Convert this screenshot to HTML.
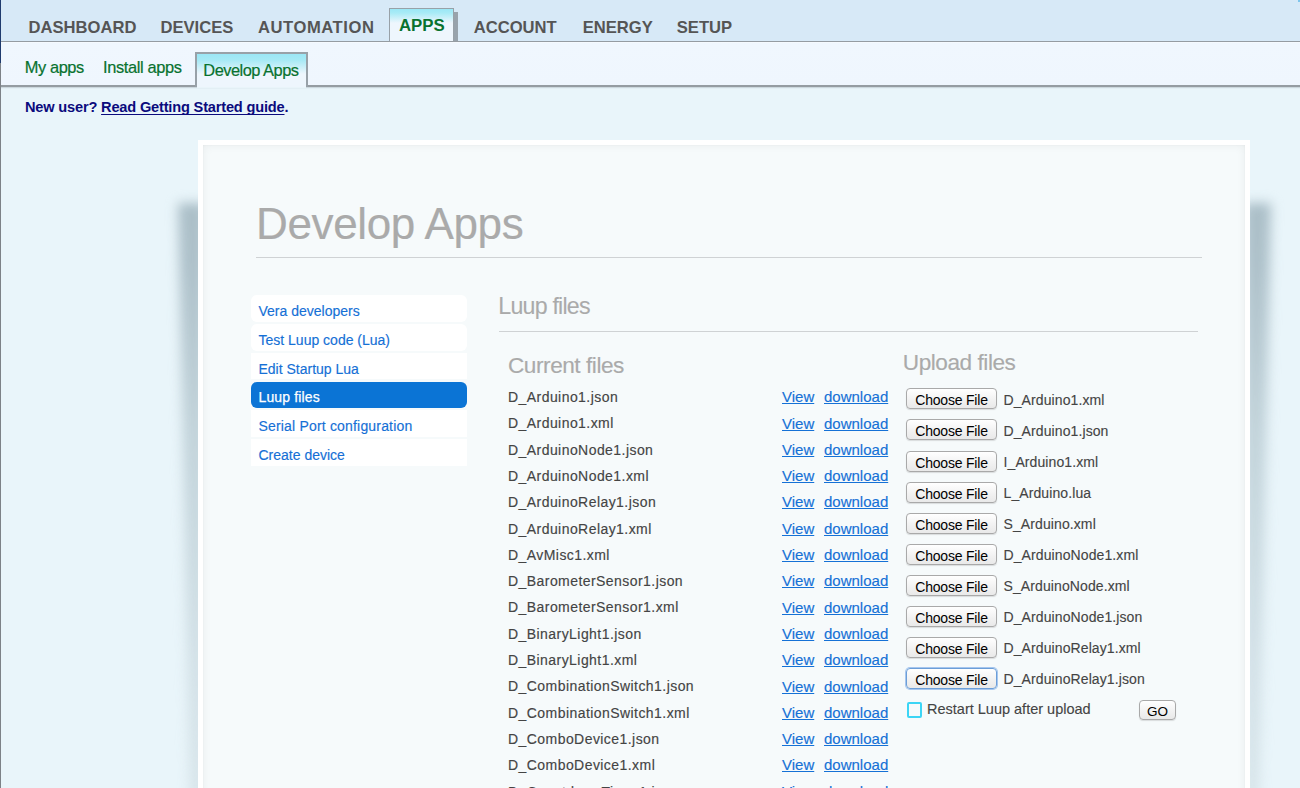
<!DOCTYPE html>
<html><head><meta charset="utf-8">
<style>
html,body{margin:0;padding:0;}
body{width:1300px;height:788px;overflow:hidden;position:relative;background:#e9f5fa;font-family:"Liberation Sans",sans-serif;}
.a{position:absolute;white-space:nowrap;}
#edge{left:0;top:0;width:1px;height:788px;background:#7d8287;}
#edge2{left:0;top:0;width:1px;height:63px;background:#1f3b6e;}
#topnav{left:0;top:0;width:1300px;height:41px;background:#d7e9f7;border-bottom:1px solid #959ca2;}
#subnav{left:0;top:42px;width:1300px;height:43px;background:linear-gradient(#fbfdff 0,#f0f7fe 1px,#eff6fe 100%);border-bottom:2px solid #959ca2;box-shadow:0 1px 1px rgba(120,130,140,0.25);}
.tab{font-weight:bold;font-size:16.6px;color:#555;top:18px;line-height:20px;}
#appsTab{left:389px;top:8px;width:63px;height:32px;border:1px solid #98a1a8;border-bottom:none;background:linear-gradient(#9be7f6 0px,#a8ebf6 4px,#eef6fd 14px,#eef6fd 100%);}
#appsShadow{left:453px;top:12px;width:5px;height:29px;background:#98a3ac;}
.sub{font-size:16.4px;color:#08722f;-webkit-text-stroke:0.2px #08722f;top:57.5px;line-height:18px;}
#devTab{left:195px;top:52px;width:109px;height:33px;border:2px solid #98a1a8;border-bottom:none;background:linear-gradient(#9be6f5 0px,#a6e9f5 6px,#eef6fd 20px);}
#newuser{left:25px;top:98.6px;font-size:14.6px;font-weight:bold;color:#0b0b7d;line-height:17px;letter-spacing:-0.18px;}
#newuser a{color:#0b0b7d;text-decoration:underline;text-decoration-skip-ink:none;text-underline-offset:2px;}
#shL{left:140px;top:170px;width:70px;height:660px;filter:blur(6px);}
#shR{left:1240px;top:170px;width:60px;height:660px;filter:blur(6px);}
.shi{position:absolute;left:0;top:0;width:100%;height:100%;}
#panel{left:198px;top:140px;width:1042px;height:700px;border:5px solid #fff;background:#f6fafb;box-shadow:inset 0 0 2px rgba(0,0,0,0.06),inset 0 0 10px rgba(0,0,0,0.06);}
#title{left:256px;top:199.2px;font-size:44px;color:#aaa;-webkit-text-stroke:0.2px #aaa;line-height:50px;letter-spacing:-0.35px;}
#hr1{left:256px;top:257px;width:946px;height:1px;background:#cfd2d4;}
.mi{left:251px;width:208px;height:26.5px;background:#fff;color:#1570d6;-webkit-text-stroke:0.15px #1570d6;font-size:14px;line-height:26.5px;padding-left:7.5px;padding-top:2.8px;height:23.7px;}
.mi.rnd{border-radius:6px;}
.mi.sel{background:#0b74d5;color:#fff;border-radius:6px;-webkit-text-stroke:0.25px #fff;letter-spacing:0.15px;}
#h2{left:498.3px;top:292.6px;font-size:23.2px;color:#aaa;-webkit-text-stroke:0.1px #aaa;line-height:26px;letter-spacing:-0.78px;}
#hr2{left:499px;top:331px;width:699px;height:1px;background:#cfd2d4;}
#cur{left:508px;top:352.9px;font-size:22.6px;color:#aaa;-webkit-text-stroke:0.15px #aaa;line-height:25px;letter-spacing:-0.45px;}
#upl{left:902.8px;top:350.3px;font-size:22.6px;color:#aaa;-webkit-text-stroke:0.15px #aaa;line-height:25px;letter-spacing:-0.45px;}
.fn{left:508px;font-size:14px;line-height:14px;color:#444;-webkit-text-stroke:0.15px #444;letter-spacing:0.44px;}
.lk{font-size:15px;line-height:15px;color:#1571d6;-webkit-text-stroke:0.15px #1571d6;text-decoration:underline;text-decoration-skip-ink:none;}
.btn{left:906px;width:89px;height:19px;border:1px solid #a9a9a9;border-radius:4px;background:linear-gradient(#fff,#f1f1f1 60%,#e9e9e9);box-shadow:0 1px 1px rgba(0,0,0,0.12);font-size:14px;line-height:22.5px;text-align:center;color:#000;letter-spacing:-0.2px;}
.btn.foc{border-color:#6c9ed8;box-shadow:0 0 0 1px #a6c6ee;}
.up{left:1003.5px;font-size:14px;line-height:14px;color:#444;-webkit-text-stroke:0.12px #444;letter-spacing:0.1px;}
#cb{left:906.5px;top:702px;width:11.5px;height:11.5px;border:2px solid #3cd5f5;border-radius:2px;}
#restart{left:927px;top:700.2px;font-size:14.5px;line-height:18px;color:#444;-webkit-text-stroke:0.12px #444;}
#go{left:1139px;top:700px;width:35px;height:18px;border:1px solid #a9a9a9;border-radius:4px;background:linear-gradient(#fff,#f1f1f1 60%,#e9e9e9);box-shadow:0 1px 1px rgba(0,0,0,0.12);font-size:13.5px;line-height:21px;text-align:center;color:#000;}
#dot{left:1298px;top:0;width:2px;height:2px;background:#62b9e8;border-radius:1px;}

</style></head><body>
<div class="a" id="topnav"></div>
<div class="a" id="subnav"></div>
<div class="a" id="edge"></div>
<div class="a" id="edge2"></div>
<div class="a" id="appsShadow"></div>
<div class="a" id="appsTab"></div>
<div class="a tab" style="left:28.5px">DASHBOARD</div>
<div class="a tab" style="left:160.5px">DEVICES</div>
<div class="a tab" style="left:258px;letter-spacing:0.55px">AUTOMATION</div>
<div class="a tab" style="left:399px;top:15.5px;font-size:16.8px;color:#08722f">APPS</div>
<div class="a tab" style="left:473.7px">ACCOUNT</div>
<div class="a tab" style="left:582.7px">ENERGY</div>
<div class="a tab" style="left:676.8px">SETUP</div>
<div class="a" id="devTab"></div>
<div class="a" style="left:197px;top:87px;width:109px;height:1px;background:#e9f5fa"></div>
<div class="a sub" style="left:24.8px;letter-spacing:-0.42px">My apps</div>
<div class="a sub" style="left:103px;letter-spacing:-0.35px">Install apps</div>
<div class="a sub" style="left:203.3px;top:61px;letter-spacing:-0.5px">Develop Apps</div>
<div class="a" id="newuser">New user? <a>Read Getting Started guide</a>.</div>
<div class="a" id="shL"><div class="shi" style="clip-path:polygon(38px 33px,66px 33px,66px 660px,50px 660px,44px 330px);background:linear-gradient(#a9bdc6 0px,#aec1ca 90px,#c2d3da 260px,#d3e1e7 500px,#d9e6eb 660px)"></div></div>
<div class="a" id="shR"><div class="shi" style="clip-path:polygon(4px 33px,31px 33px,25px 330px,19px 660px,4px 660px);background:linear-gradient(#a9bdc6 0px,#aec1ca 90px,#c2d3da 260px,#d3e1e7 500px,#d9e6eb 660px)"></div></div>
<div class="a" id="panel"></div>
<div class="a" id="title">Develop Apps</div>
<div class="a" id="hr1"></div>
<div class="a" id="h2">Luup files</div>
<div class="a" id="hr2"></div>
<div class="a" id="cur">Current files</div>
<div class="a" id="upl">Upload files</div>
<div class="a mi rnd" style="top:295.3px">Vera developers</div>
<div class="a mi rnd" style="top:324.05px">Test Luup code (Lua)</div>
<div class="a mi" style="top:352.8px">Edit Startup Lua</div>
<div class="a mi sel" style="top:381.55px">Luup files</div>
<div class="a mi" style="top:410.3px;letter-spacing:0.18px">Serial Port configuration</div>
<div class="a mi" style="top:439.05px">Create device</div>
<div class="a fn" style="top:390.05px">D_Arduino1.json</div>
<div class="a lk" style="top:389.2px;left:782px">View</div><div class="a lk" style="top:389.2px;left:824px">download</div>
<div class="a fn" style="top:416.35px">D_Arduino1.xml</div>
<div class="a lk" style="top:415.5px;left:782px">View</div><div class="a lk" style="top:415.5px;left:824px">download</div>
<div class="a fn" style="top:442.65px">D_ArduinoNode1.json</div>
<div class="a lk" style="top:441.8px;left:782px">View</div><div class="a lk" style="top:441.8px;left:824px">download</div>
<div class="a fn" style="top:468.95px">D_ArduinoNode1.xml</div>
<div class="a lk" style="top:468.1px;left:782px">View</div><div class="a lk" style="top:468.1px;left:824px">download</div>
<div class="a fn" style="top:495.25px">D_ArduinoRelay1.json</div>
<div class="a lk" style="top:494.4px;left:782px">View</div><div class="a lk" style="top:494.4px;left:824px">download</div>
<div class="a fn" style="top:521.55px">D_ArduinoRelay1.xml</div>
<div class="a lk" style="top:520.7px;left:782px">View</div><div class="a lk" style="top:520.7px;left:824px">download</div>
<div class="a fn" style="top:547.85px">D_AvMisc1.xml</div>
<div class="a lk" style="top:547px;left:782px">View</div><div class="a lk" style="top:547px;left:824px">download</div>
<div class="a fn" style="top:574.15px">D_BarometerSensor1.json</div>
<div class="a lk" style="top:573.3px;left:782px">View</div><div class="a lk" style="top:573.3px;left:824px">download</div>
<div class="a fn" style="top:600.45px">D_BarometerSensor1.xml</div>
<div class="a lk" style="top:599.6px;left:782px">View</div><div class="a lk" style="top:599.6px;left:824px">download</div>
<div class="a fn" style="top:626.75px">D_BinaryLight1.json</div>
<div class="a lk" style="top:625.9px;left:782px">View</div><div class="a lk" style="top:625.9px;left:824px">download</div>
<div class="a fn" style="top:653.05px">D_BinaryLight1.xml</div>
<div class="a lk" style="top:652.2px;left:782px">View</div><div class="a lk" style="top:652.2px;left:824px">download</div>
<div class="a fn" style="top:679.35px">D_CombinationSwitch1.json</div>
<div class="a lk" style="top:678.5px;left:782px">View</div><div class="a lk" style="top:678.5px;left:824px">download</div>
<div class="a fn" style="top:705.65px">D_CombinationSwitch1.xml</div>
<div class="a lk" style="top:704.8px;left:782px">View</div><div class="a lk" style="top:704.8px;left:824px">download</div>
<div class="a fn" style="top:731.95px">D_ComboDevice1.json</div>
<div class="a lk" style="top:731.1px;left:782px">View</div><div class="a lk" style="top:731.1px;left:824px">download</div>
<div class="a fn" style="top:758.25px">D_ComboDevice1.xml</div>
<div class="a lk" style="top:757.4px;left:782px">View</div><div class="a lk" style="top:757.4px;left:824px">download</div>
<div class="a fn" style="top:784.55px">D_CountdownTimer1.json</div>
<div class="a lk" style="top:783.7px;left:782px">View</div><div class="a lk" style="top:783.7px;left:824px">download</div>
<div class="a btn" style="top:388.3px">Choose File</div>
<div class="a up" style="top:392.75px">D_Arduino1.xml</div>
<div class="a btn" style="top:419.42px">Choose File</div>
<div class="a up" style="top:423.75px">D_Arduino1.json</div>
<div class="a btn" style="top:450.54px">Choose File</div>
<div class="a up" style="top:454.75px">I_Arduino1.xml</div>
<div class="a btn" style="top:481.66px">Choose File</div>
<div class="a up" style="top:485.75px">L_Arduino.lua</div>
<div class="a btn" style="top:512.78px">Choose File</div>
<div class="a up" style="top:516.75px">S_Arduino.xml</div>
<div class="a btn" style="top:543.9px">Choose File</div>
<div class="a up" style="top:547.75px">D_ArduinoNode1.xml</div>
<div class="a btn" style="top:575.02px">Choose File</div>
<div class="a up" style="top:578.75px">S_ArduinoNode.xml</div>
<div class="a btn" style="top:606.14px">Choose File</div>
<div class="a up" style="top:609.75px">D_ArduinoNode1.json</div>
<div class="a btn" style="top:637.26px">Choose File</div>
<div class="a up" style="top:640.75px">D_ArduinoRelay1.xml</div>
<div class="a btn foc" style="top:668.38px">Choose File</div>
<div class="a up" style="top:671.75px">D_ArduinoRelay1.json</div>
<div class="a" id="cb"></div>
<div class="a" id="restart">Restart Luup after upload</div>
<div class="a" id="go">GO</div>
<div class="a" id="dot"></div>
</body></html>
